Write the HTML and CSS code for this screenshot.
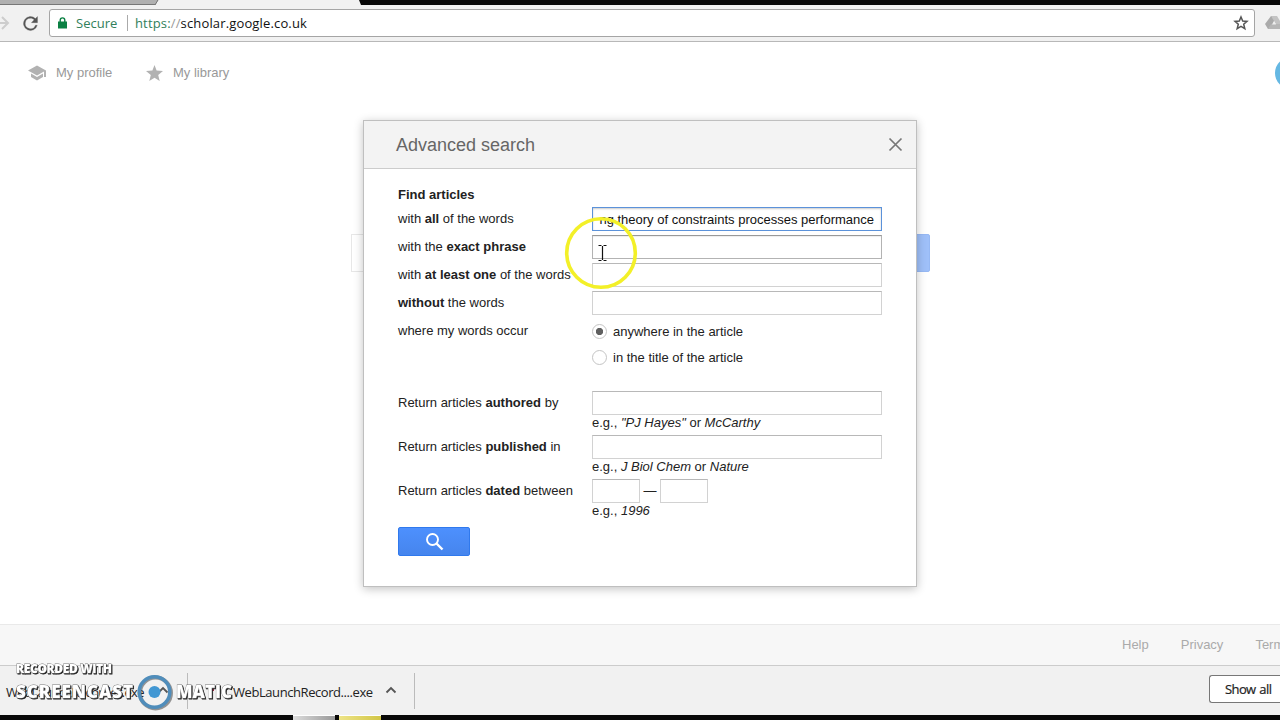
FILE: index.html
```html
<!DOCTYPE html>
<html lang="en">
<head>
<meta charset="utf-8">
<title>Google Scholar</title>
<link rel="stylesheet" href="styles.css">
</head>
<body>
<div class="tabs"><svg width="1280" height="5"><path d="M0 0H158L155 5H0Z" fill="#b0b0b0"/><path d="M158 0H359L361 5H155Z" fill="#f1f1f1"/><path d="M158 0L155 5M0 4.5H155" stroke="#777" fill="none"/></svg></div>
<header class="toolbar">
  <svg class="forward" width="12" height="18" viewBox="0 0 12 18"><path d="M0 9H9M3 3L9 9L3 15" fill="none" stroke="#cdcdcd" stroke-width="2"/></svg>
  <svg class="reload" width="24" height="24" viewBox="0 0 24 24"><path d="M17.65 6.35A8 8 0 1 0 19.73 14h-2.08A6 6 0 1 1 12 6c1.66 0 3.14.69 4.22 1.78L13 11h7V4z" fill="#555" stroke="#555" stroke-width=".3"/></svg>
  <div class="address">
    <svg class="lock" width="9" height="12" viewBox="0 0 9 12"><path d="M2.2 6V3.2a2.3 2.3 0 0 1 4.6 0V6" fill="none" stroke="#0b8043" stroke-width="1.4"/><path d="M0 4.5h9v7H0z" fill="#0b8043"/></svg>
    <span class="secure">Secure</span><i class="divider"></i>
    <span class="url"><span class="scheme">https:</span><span class="slashes">//</span>scholar.google.co.uk</span>
    <svg class="bookmark" width="16" height="16" viewBox="0 0 16 16"><path d="M8 2L9.7 6.1L14 6.4L10.7 9.3L11.8 13.6L8 11.3L4.2 13.6L5.3 9.3L2 6.4L6.3 6.1Z" fill="none" stroke="#555" stroke-width="1.5"/></svg>
  </div>
  <svg class="drive" width="18" height="16" viewBox="0 0 18 16"><path d="M6 1h6L5 14H3L0 9Z" fill="#aaa"/><path d="M6 1h6l6 10h-6Z" fill="#c3c3c3"/><path d="M3 14l3-5h12l-3 5Z" fill="#b6b6b6"/><path d="M9 6l2 3.5H7z" fill="#eee"/></svg>
</header>
<main class="page">
  <nav class="links">
    <svg width="18" height="16" viewBox="0 0 18 16"><path d="M9 .5L0 5.5L9 10.5L16 6.6V12H18V5.5Z" fill="#b2b2b2"/><path d="M3 8.6V12L9 15.5L15 12V8.6L9 12Z" fill="#b2b2b2"/></svg><span class="profile">My profile</span>
    <svg class="library-star" width="17" height="16" viewBox="0 0 17 16"><path d="M8.5 0L10.6 5.4L17 6L12.2 10L13.7 16L8.5 12.8L3.3 16L4.8 10L0 6L6.4 5.4Z" fill="#b2b2b2"/></svg><span class="library">My library</span>
  </nav>
  <i class="avatar"></i>
  <i class="searchbox"></i><i class="searchbutton"></i>
  <footer class="footer"><span>Help</span><span>Privacy</span><span>Terms</span></footer>
  <section class="dialog">
    <header class="dialog-head"><h1>Advanced search</h1>
      <svg width="15" height="15" viewBox="0 0 15 15"><path d="M1.5 1.5l12 12M13.5 1.5l-12 12" stroke="#777" stroke-width="1.7"/></svg></header>
    <form class="form">
      <div class="title"><b>Find articles</b></div>
      <div class="row"><label>with <b>all</b> of the words</label><div class="field focused"><span class="value">ng theory of constraints processes performance</span></div></div>
      <div class="row"><label>with the <b>exact phrase</b></label><div class="field hovered"></div></div>
      <div class="row"><label>with <b>at least one</b> of the words</label><div class="field"></div></div>
      <div class="row"><label><b>without</b> the words</label><div class="field"></div></div>
      <div class="row occur"><label>where my words occur</label><div class="choices"><div class="choice"><i class="radio checked"></i><span>anywhere in the article</span></div><div class="choice"><i class="radio"></i><span>in the title of the article</span></div></div></div>
      <div class="row detail"><label>Return articles <b>authored</b> by</label><div><div class="field"></div><p class="hint">e.g., <em>"PJ Hayes"</em> or <em>McCarthy</em></p></div></div>
      <div class="row detail"><label>Return articles <b>published</b> in</label><div><div class="field"></div><p class="hint">e.g., <em>J Biol Chem</em> or <em>Nature</em></p></div></div>
      <div class="row detail"><label>Return articles <b>dated</b> between</label><div><div class="dates"><div class="field year"></div><span>—</span><div class="field year"></div></div><p class="hint">e.g., <em>1996</em></p></div></div>
      <div class="submit"><svg width="19" height="19" viewBox="0 0 19 19"><circle cx="7.5" cy="7.5" r="5.5" fill="none" stroke="#fff" stroke-width="1.9"/><path d="M11.5 11.5l6 6" stroke="#fff" stroke-width="2.4"/></svg></div>
    </form>
  </section>
</main>
<div class="downloads">
  <div class="download first"><span>WebLaunchRecorder.exe</span><svg width="12" height="8" viewBox="0 0 12 8"><path d="M1.5 6.5L6 2l4.5 4.5" fill="none" stroke="#555" stroke-width="1.8"/></svg></div>
  <div class="download second"><i class="file-icon"></i><span>WebLaunchRecord....exe</span><svg width="12" height="8" viewBox="0 0 12 8"><path d="M1.5 6.5L6 2l4.5 4.5" fill="none" stroke="#555" stroke-width="1.8"/></svg></div>
  <div class="show-all">Show all</div>
</div>
<div class="taskbar"><i class="task gray"></i><i class="task yellow"></i></div>
<svg class="watermark" width="230" height="56" viewBox="0 0 230 56">
  <g class="mark-text"><text x="6" y="18" font-size="12" textLength="96">RECORDED WITH</text><text x="6" y="43" font-size="17" textLength="117">SCREENCAST</text><text x="166" y="43" font-size="17" textLength="56">MATIC</text></g>
  <g transform="translate(144.5 37)" fill="none"><circle cx="1" cy="1" r="15.5" stroke="#555" stroke-width="4" opacity=".6"/><circle r="15.3" stroke="#4f8dbb" stroke-width="3.5"/><circle r="6" fill="#4197d3"/></g>
</svg>
<svg class="pointer" width="76" height="76" viewBox="0 0 76 76"><circle cx="38" cy="38" r="34.3" fill="none" stroke="#f3f028" stroke-width="3.6"/><path d="M35.5 30.5h3M40.5 30.5h3M39.5 31v14M35.5 45.5h3M40.5 45.5h3" fill="none" stroke="#111" stroke-width="1.2"/></svg>
</body>
</html>
```
FILE: styles.css
```css
* { box-sizing: border-box; }
body { margin: 0; width: 1280px; height: 720px; overflow: hidden; position: relative; display: flex; flex-direction: column; background: #fff; color: #222; font: 13px/18px "Liberation Sans", Arial, sans-serif; }
svg { display: block; flex: none; }
.tabs { height: 5px; background: #080808; }
.toolbar { height: 37px; background: #f1f1f1; border-bottom: 1px solid #b8b8b8; display: flex; align-items: center; overflow: hidden; font: 13px/18px "Open Sans", "Noto Sans", sans-serif; }
.forward { width: 12px; margin-left: -1px; }
.reload { margin-left: 9px; width: 21px; height: 21px; }
.address { width: 1206px; height: 28px; flex: none; margin-left: 8px; background: #fff; border: 1px solid #a5a5a5; border-radius: 3px; display: flex; align-items: center; padding-left: 8px; }
.secure { margin-left: 9px; width: 42px; color: #31805b; }
.divider { width: 1px; height: 16px; background: #aaa; margin: 0 7px 0 9px; }
.url { color: #111; letter-spacing: .15px; white-space: nowrap; }
.scheme { color: #31805b; }
.slashes { color: #999; }
.bookmark { margin-left: auto; margin-right: 5px; }
.drive { margin-left: 10px; }
.page { height: 623px; position: relative; display: flex; flex-direction: column; }
.links { height: 61px; display: flex; align-items: center; padding-left: 28px; color: #999; }
.profile { margin-left: 10px; width: 56px; white-space: nowrap; }
.library-star { margin-left: 34px; }
.library { margin-left: 10px; }
.avatar { position: absolute; left: 1275px; top: 15px; width: 32px; height: 32px; border-radius: 50%; background: #65b8e3; }
.searchbox { position: absolute; left: 351px; top: 192px; width: 520px; height: 38px; border: 1px solid #e7e7e7; }
.searchbutton { position: absolute; left: 858px; top: 192px; width: 72px; height: 38px; border-radius: 2px; background: #9fc0f9; border: 1px solid #97b9f4; }
.footer { margin-top: auto; height: 41px; background: #f7f7f7; border-top: 1px solid #e9e9e9; display: flex; gap: 32px; align-items: center; padding: 0 0 0 1122px; color: #aaa; white-space: nowrap; overflow: hidden; }
.dialog { position: absolute; left: 363px; top: 78px; width: 554px; height: 467px; border: 1px solid #bfbfbf; background: #fff; box-shadow: 0 2px 9px rgba(0,0,0,.24); }
.dialog-head { height: 48px; border-bottom: 1px solid #ccc; background: #f3f3f3; display: flex; align-items: center; justify-content: space-between; padding: 0 13px 0 32px; }
.dialog-head h1 { margin: 0; font-size: 18px; line-height: 22px; font-weight: 400; color: #666; }
.form { padding: 16px 0 0 34px; }
.title { height: 22px; padding-top: 1px; }
.row { height: 28px; display: grid; grid-template-columns: 194px 290px; align-items: start; white-space: nowrap; }
.row label { padding-top: 3px; }
.field { height: 24px; border: 1px solid #d2d2d2; border-top-color: #b8b8b8; background: #fff; }
.focused { border-color: #5b92da; box-shadow: inset 0 1px 2px #ccc; overflow: hidden; display: flex; align-items: center; justify-content: flex-end; padding: 2px 7px 0 0; color: #111; }
.hovered { border-color: #b3b3b3; border-top-color: #999; box-shadow: inset 0 1px 1px #eee; }
.occur { height: 72px; }
.choices { margin-top: -1px; }
.choice { height: 26px; display: flex; align-items: center; }
.choice span { padding-top: 1px; }
.radio { width: 15px; height: 15px; border: 1px solid #c4c4c4; border-radius: 50%; margin-right: 6px; }
.checked { background: radial-gradient(circle, #606060 0 3.3px, transparent 4px); }
.detail { height: 44px; }
.hint { margin: 0; height: 20px; line-height: 15px; }
.dates { display: flex; align-items: center; }
.dates span { width: 20px; text-align: center; line-height: 24px; }
.year { width: 48px; }
.submit { width: 72px; height: 29px; margin-top: 4px; border: 1px solid #3079ed; border-radius: 2px; background: linear-gradient(#4d90fe,#4685ed); display: flex; align-items: center; justify-content: center; padding-left: 1px; }
.downloads { height: 50px; border-top: 1px solid #ccc; background: #f1f1f1; display: flex; align-items: center; font: 13px/18px "Open Sans", "Noto Sans", sans-serif; letter-spacing: -.43px; color: #222; white-space: nowrap; }
.download { display: flex; align-items: center; height: 36px; border-right: 1px solid #bbb; padding-top: 2px; }
.download svg { margin: -3px 0 0 auto; }
.first { width: 188px; padding-left: 6px; padding-right: 18px; letter-spacing: -.65px; }
.second { width: 227px; padding-left: 22px; padding-right: 17px; }
.file-icon { width: 4px; height: 4px; background: #a21e3e; margin: -6px 19px 0 0; }
.show-all { margin-left: auto; width: 71px; height: 28px; border: 1px solid #777; border-right: 0; border-radius: 3px 0 0 3px; padding: 4px 0 0 15px; background: #fff; letter-spacing: -.6px; word-spacing: 1px; -webkit-text-stroke: .2px #222; margin-bottom: 4px; }
.taskbar { height: 5px; background: #080808; display: flex; }
.task { width: 42px; height: 5px; border-top: 1px solid #fff; }
.gray { margin-left: 293px; background: linear-gradient(90deg,#ddd,#999); }
.yellow { margin-left: 4px; background: linear-gradient(90deg,#eee488,#d2c646); }
.watermark { position: absolute; left: 10px; top: 655px; }
.mark-text { fill: #fff; stroke: #777; stroke-width: .8px; paint-order: stroke; font-family: "Open Sans", sans-serif; font-weight: 800; filter: drop-shadow(1px 1px .7px #222); }
.pointer { position: absolute; left: 563px; top: 215px; }
```
